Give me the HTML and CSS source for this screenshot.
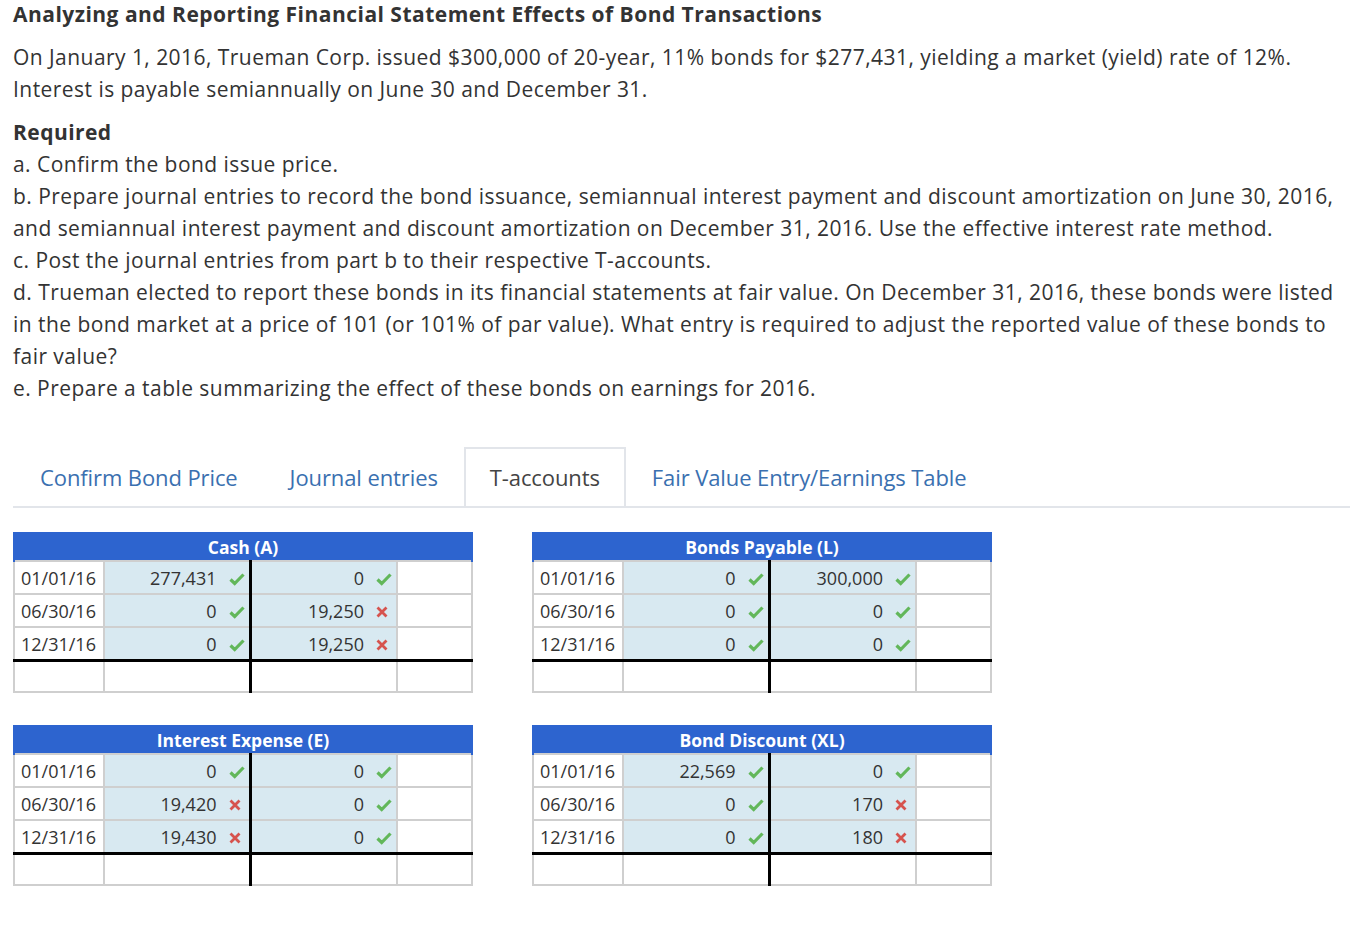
FILE: index.html
```html
<!DOCTYPE html>
<html lang="en">
<head>
    <meta charset="UTF-8">
    <title>Analyzing and Reporting Financial Statement Effects of Bond Transactions</title>
    <link rel="stylesheet" href="styles.css">
</head>
<body>
    <div class="page">
        <h1 class="title">Analyzing and Reporting Financial Statement Effects of Bond Transactions</h1>
        <p class="intro">On January 1, 2016, Trueman Corp. issued $300,000 of 20-year, 11% bonds for $277,431, yielding a market (yield) rate of 12%.<br>Interest is payable semiannually on June 30 and December 31.</p>
        <div class="required">
            <h2>Required</h2>
            <p>a. Confirm the bond issue price.</p>
            <p>b. Prepare journal entries to record the bond issuance, semiannual interest payment and discount amortization on June 30, 2016,<br>and semiannual interest payment and discount amortization on December 31, 2016. Use the effective interest rate method.</p>
            <p>c. Post the journal entries from part b to their respective T-accounts.</p>
            <p>d. Trueman elected to report these bonds in its financial statements at fair value. On December 31, 2016, these bonds were listed<br>in the bond market at a price of 101 (or 101% of par value). What entry is required to adjust the reported value of these bonds to<br>fair value?</p>
            <p>e. Prepare a table summarizing the effect of these bonds on earnings for 2016.</p>
        </div>

        <ul class="tabs">
            <li class="tab">Confirm Bond Price</li>
            <li class="tab">Journal entries</li>
            <li class="tab active">T-accounts</li>
            <li class="tab">Fair Value Entry/Earnings Table</li>
        </ul>

        <div class="accounts">
            <table class="taccount">
                <colgroup><col class="c-date"><col class="c-dr"><col class="c-cr"><col class="c-bal"></colgroup>
                <tr><th colspan="4">Cash (A)</th></tr>
                <tr>
                    <td class="date">01/01/16</td>
                    <td class="amt">277,431<svg class="ok" viewBox="0 0 16 16"><path d="M1.5 8.5l4.2 4 8.8-9"/></svg></td>
                    <td class="amt cr">0<svg class="ok" viewBox="0 0 16 16"><path d="M1.5 8.5l4.2 4 8.8-9"/></svg></td>
                    <td></td>
                </tr>
                <tr>
                    <td class="date">06/30/16</td>
                    <td class="amt">0<svg class="ok" viewBox="0 0 16 16"><path d="M1.5 8.5l4.2 4 8.8-9"/></svg></td>
                    <td class="amt cr">19,250<svg class="bad" viewBox="0 0 16 16"><path d="M1.5 3.5l9 9M10.5 3.5l-9 9"/></svg></td>
                    <td></td>
                </tr>
                <tr>
                    <td class="date">12/31/16</td>
                    <td class="amt">0<svg class="ok" viewBox="0 0 16 16"><path d="M1.5 8.5l4.2 4 8.8-9"/></svg></td>
                    <td class="amt cr">19,250<svg class="bad" viewBox="0 0 16 16"><path d="M1.5 3.5l9 9M10.5 3.5l-9 9"/></svg></td>
                    <td></td>
                </tr>
                <tr class="total"><td></td><td></td><td class="cr"></td><td></td></tr>
            </table>

            <table class="taccount">
                <colgroup><col class="c-date"><col class="c-dr"><col class="c-cr"><col class="c-bal"></colgroup>
                <tr><th colspan="4">Bonds Payable (L)</th></tr>
                <tr>
                    <td class="date">01/01/16</td>
                    <td class="amt">0<svg class="ok" viewBox="0 0 16 16"><path d="M1.5 8.5l4.2 4 8.8-9"/></svg></td>
                    <td class="amt cr">300,000<svg class="ok" viewBox="0 0 16 16"><path d="M1.5 8.5l4.2 4 8.8-9"/></svg></td>
                    <td></td>
                </tr>
                <tr>
                    <td class="date">06/30/16</td>
                    <td class="amt">0<svg class="ok" viewBox="0 0 16 16"><path d="M1.5 8.5l4.2 4 8.8-9"/></svg></td>
                    <td class="amt cr">0<svg class="ok" viewBox="0 0 16 16"><path d="M1.5 8.5l4.2 4 8.8-9"/></svg></td>
                    <td></td>
                </tr>
                <tr>
                    <td class="date">12/31/16</td>
                    <td class="amt">0<svg class="ok" viewBox="0 0 16 16"><path d="M1.5 8.5l4.2 4 8.8-9"/></svg></td>
                    <td class="amt cr">0<svg class="ok" viewBox="0 0 16 16"><path d="M1.5 8.5l4.2 4 8.8-9"/></svg></td>
                    <td></td>
                </tr>
                <tr class="total"><td></td><td></td><td class="cr"></td><td></td></tr>
            </table>

            <table class="taccount">
                <colgroup><col class="c-date"><col class="c-dr"><col class="c-cr"><col class="c-bal"></colgroup>
                <tr><th colspan="4">Interest Expense (E)</th></tr>
                <tr>
                    <td class="date">01/01/16</td>
                    <td class="amt">0<svg class="ok" viewBox="0 0 16 16"><path d="M1.5 8.5l4.2 4 8.8-9"/></svg></td>
                    <td class="amt cr">0<svg class="ok" viewBox="0 0 16 16"><path d="M1.5 8.5l4.2 4 8.8-9"/></svg></td>
                    <td></td>
                </tr>
                <tr>
                    <td class="date">06/30/16</td>
                    <td class="amt">19,420<svg class="bad" viewBox="0 0 16 16"><path d="M1.5 3.5l9 9M10.5 3.5l-9 9"/></svg></td>
                    <td class="amt cr">0<svg class="ok" viewBox="0 0 16 16"><path d="M1.5 8.5l4.2 4 8.8-9"/></svg></td>
                    <td></td>
                </tr>
                <tr>
                    <td class="date">12/31/16</td>
                    <td class="amt">19,430<svg class="bad" viewBox="0 0 16 16"><path d="M1.5 3.5l9 9M10.5 3.5l-9 9"/></svg></td>
                    <td class="amt cr">0<svg class="ok" viewBox="0 0 16 16"><path d="M1.5 8.5l4.2 4 8.8-9"/></svg></td>
                    <td></td>
                </tr>
                <tr class="total"><td></td><td></td><td class="cr"></td><td></td></tr>
            </table>

            <table class="taccount">
                <colgroup><col class="c-date"><col class="c-dr"><col class="c-cr"><col class="c-bal"></colgroup>
                <tr><th colspan="4">Bond Discount (XL)</th></tr>
                <tr>
                    <td class="date">01/01/16</td>
                    <td class="amt">22,569<svg class="ok" viewBox="0 0 16 16"><path d="M1.5 8.5l4.2 4 8.8-9"/></svg></td>
                    <td class="amt cr">0<svg class="ok" viewBox="0 0 16 16"><path d="M1.5 8.5l4.2 4 8.8-9"/></svg></td>
                    <td></td>
                </tr>
                <tr>
                    <td class="date">06/30/16</td>
                    <td class="amt">0<svg class="ok" viewBox="0 0 16 16"><path d="M1.5 8.5l4.2 4 8.8-9"/></svg></td>
                    <td class="amt cr">170<svg class="bad" viewBox="0 0 16 16"><path d="M1.5 3.5l9 9M10.5 3.5l-9 9"/></svg></td>
                    <td></td>
                </tr>
                <tr>
                    <td class="date">12/31/16</td>
                    <td class="amt">0<svg class="ok" viewBox="0 0 16 16"><path d="M1.5 8.5l4.2 4 8.8-9"/></svg></td>
                    <td class="amt cr">180<svg class="bad" viewBox="0 0 16 16"><path d="M1.5 3.5l9 9M10.5 3.5l-9 9"/></svg></td>
                    <td></td>
                </tr>
                <tr class="total"><td></td><td></td><td class="cr"></td><td></td></tr>
            </table>
        </div>
    </div>
</body>
</html>
```

FILE: styles.css
```css
body {
    margin: 0;
    font-family: "Open Sans", "Liberation Sans", sans-serif;
    color: #333;
    background: #fff;
}

.page {
    padding: 0 4px 40px 13px;
}

.title {
    margin: 0;
    font-size: 21px;
    line-height: 28px;
    font-weight: 700;
    letter-spacing: 0.48px;
    white-space: nowrap;
}

.intro {
    margin: 13px 0 0;
    font-size: 21px;
    line-height: 32px;
    letter-spacing: 0.45px;
    white-space: nowrap;
}

.required {
    margin-top: 11px;
    font-size: 21px;
    line-height: 32px;
    letter-spacing: 0.45px;
    white-space: nowrap;
}

.required h2 {
    margin: 0;
    font-size: 21px;
    line-height: 32px;
    font-weight: 700;
}

.required p {
    margin: 0;
}

.tabs {
    display: flex;
    list-style: none;
    margin: 43px 0 0;
    padding: 0 0 0 1px;
    border-bottom: 2px solid #e2e5ea;
}

.tab {
    height: 57px;
    line-height: 56px;
    padding: 0 24px;
    font-size: 22px;
    letter-spacing: -0.1px;
    color: #3a70b0;
    border: 2px solid transparent;
    border-bottom: none;
}

.tab.active {
    color: #444;
    border-color: #e2e5ea;
    background: #fff;
}

.accounts {
    display: grid;
    grid-template-columns: 458px 458px;
    column-gap: 61px;
    row-gap: 32px;
    margin-top: 24px;
}

.taccount {
    border-collapse: collapse;
    table-layout: fixed;
    width: 458px;
    font-size: 18px;
    color: #333;
}

.c-date { width: 90px; }
.c-dr { width: 146px; }
.c-cr { width: 147px; }
.c-bal { width: 75px; }

.taccount th {
    height: 26px;
    padding: 0;
    background: #2d64cf;
    color: #fff;
    font-size: 17.5px;
    font-weight: 700;
    border: 2px solid #2d64cf;
    border-bottom: none;
}

.taccount td {
    height: 31px;
    padding: 0;
    border: 2px solid #cfcfcf;
}

.taccount .date {
    padding-left: 6px;
}

.taccount .amt {
    text-align: right;
    padding-right: 4px;
    background: #d8e9f1;
    white-space: nowrap;
}

.taccount .cr {
    border-left: 3px solid #000;
}

.taccount .total td {
    border-top: 3px solid #000;
    height: 29px;
}

.ok, .bad {
    width: 16px;
    height: 16px;
    margin-left: 12px;
    vertical-align: -2px;
    fill: none;
    stroke-width: 3.2;
}

.ok {
    stroke: #62b75a;
}

.bad {
    stroke: #d6534e;
    stroke-width: 2.8;
}
```
